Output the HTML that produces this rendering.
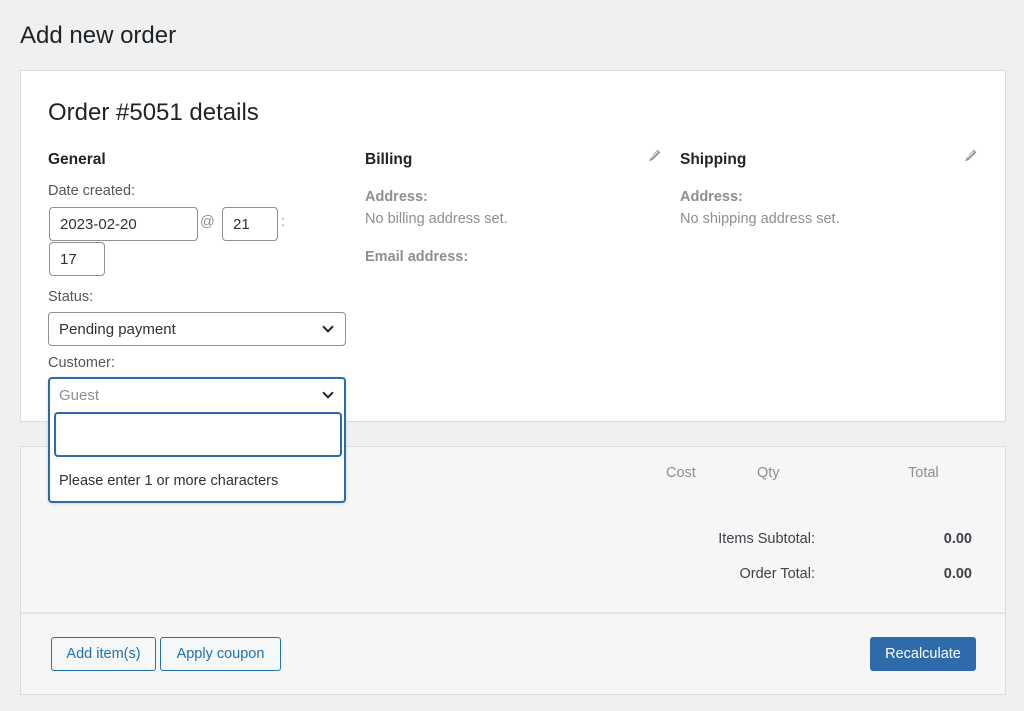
<!DOCTYPE html>
<html><head><meta charset="utf-8"><style>
*{box-sizing:border-box;margin:0;padding:0}
body{width:1024px;height:711px;background:#f0f0f1;font-family:"Liberation Sans",Arial,sans-serif;color:#1d2327;position:relative;overflow:hidden;font-size:14px}
.a{position:absolute;white-space:nowrap}
.panel{position:absolute;border:1px solid #dcdcde}
.inp{position:absolute;border:1px solid #8c8f94;border-radius:4px;background:#fff;font-size:15px;padding-left:10px;display:flex;align-items:center;color:#2c3338}
.lab{color:#50575e;font-size:14.5px}
.grey{color:#8c8f94;font-size:14.5px}
.btn{position:absolute;border:1px solid #2271b1;border-radius:3px;color:#2271b1;background:#f6f7f7;font-size:14.5px;display:flex;align-items:center;justify-content:center}
.chev{position:absolute;width:8px;height:8px;border-right:2px solid #1d2327;border-bottom:2px solid #1d2327;transform:rotate(45deg)}
.r{text-align:right}
</style></head><body>
<div class="a" style="left:20px;top:22px;font-size:24px;color:#1d2327">Add new order</div>
<div class="panel" style="left:20px;top:70px;width:986px;height:352px;background:#fff"></div>
<div class="a" style="left:48px;top:99px;font-size:24px">Order #5051 details</div>
<div class="a" style="left:48px;top:151px;font-size:15.5px;font-weight:bold">General</div>
<div class="a" style="left:365px;top:151px;font-size:15.5px;font-weight:bold">Billing</div>
<div class="a" style="left:680px;top:151px;font-size:15.5px;font-weight:bold">Shipping</div>
<svg class="a" style="left:647px;top:148px" width="15" height="15" viewBox="0 0 14 14"><path d="M3.5 9 L2 12.5 L5.5 11 L12.5 4 L10 1.5 Z" fill="#8c8f94"/><path d="M4 9.5 L10.5 3" stroke="#fff" stroke-width=".8"/></svg>
<svg class="a" style="left:963px;top:148px" width="15" height="15" viewBox="0 0 14 14"><path d="M3.5 9 L2 12.5 L5.5 11 L12.5 4 L10 1.5 Z" fill="#8c8f94"/><path d="M4 9.5 L10.5 3" stroke="#fff" stroke-width=".8"/></svg>
<div class="a lab" style="left:48px;top:183px">Date created:</div>
<div class="inp" style="left:49px;top:207px;width:149px;height:34px">2023-02-20</div>
<div class="a grey" style="left:200px;top:214px">@</div>
<div class="inp" style="left:222px;top:207px;width:56px;height:34px">21</div>
<div class="a grey" style="left:281px;top:214px">:</div>
<div class="inp" style="left:49px;top:242px;width:56px;height:34px">17</div>
<div class="a lab" style="left:48px;top:289px">Status:</div>
<div class="inp" style="left:48px;top:312px;width:298px;height:34px">Pending payment</div>
<div class="chev" style="left:324px;top:323px"></div>
<div class="a lab" style="left:48px;top:355px">Customer:</div>
<div class="a" style="left:365px;top:189px;font-size:14.5px;font-weight:bold;color:#8c8f94">Address:</div>
<div class="a grey" style="left:365px;top:211px">No billing address set.</div>
<div class="a" style="left:365px;top:249px;font-size:14.5px;font-weight:bold;color:#8c8f94">Email address:</div>
<div class="a" style="left:680px;top:189px;font-size:14.5px;font-weight:bold;color:#8c8f94">Address:</div>
<div class="a grey" style="left:680px;top:211px">No shipping address set.</div>

<div class="panel" style="left:20px;top:446px;width:986px;height:249px;background:#f6f6f6"></div>
<div class="a" style="left:21px;top:612px;width:984px;height:2px;background:#e5e5e5"></div>
<div class="a grey" style="left:666px;top:465px">Cost</div>
<div class="a grey" style="left:757px;top:465px">Qty</div>
<div class="a grey" style="left:908px;top:465px">Total</div>
<div class="a r" style="left:600px;width:215px;top:531px;color:#3c434a;font-size:14.5px">Items Subtotal:</div>
<div class="a r" style="left:900px;width:72px;top:531px;font-weight:bold;color:#3c434a;font-size:14.5px">0.00</div>
<div class="a r" style="left:600px;width:215px;top:566px;color:#3c434a;font-size:14.5px">Order Total:</div>
<div class="a r" style="left:900px;width:72px;top:566px;font-weight:bold;color:#3c434a;font-size:14.5px">0.00</div>
<div class="btn" style="left:51px;top:637px;width:105px;height:34px">Add item(s)</div>
<div class="btn" style="left:160px;top:637px;width:121px;height:34px">Apply coupon</div>
<div class="btn" style="left:870px;top:637px;width:106px;height:34px;background:#2f6aab;border-color:#2f6aab;color:#fff">Recalculate</div>

<div class="a" style="left:48px;top:377px;width:298px;height:126px;border:2px solid #2c6ba8;border-radius:4px;background:#fff;box-shadow:0 1px 3px rgba(0,0,0,.15)"></div>
<div class="a" style="left:59px;top:387px;color:#8c8f94;font-size:15px">Guest</div>
<div class="chev" style="left:324px;top:389px"></div>
<div class="a" style="left:54px;top:412px;width:288px;height:45px;border:2px solid #2c6ba8;border-radius:4px;background:#fff"></div>
<div class="a" style="left:59px;top:473px;color:#2c3338;font-size:14.5px">Please enter 1 or more characters</div>
</body></html>
